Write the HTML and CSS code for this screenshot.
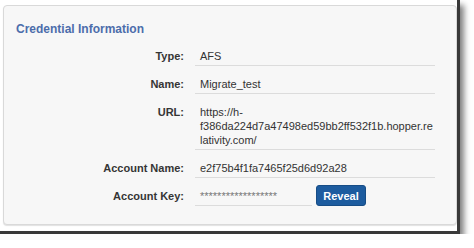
FILE: index.html
```html
<!DOCTYPE html>
<html lang="en">
<head>
    <meta charset="UTF-8">
    <meta name="viewport" content="width=device-width, initial-scale=1.0">
    <title>Credential Information</title>
    <link rel="stylesheet" href="styles.css">
</head>
<body>
    <div class="shot">
        <div class="panel">
            <h2 class="panel-title">Credential Information</h2>

            <div class="row">
                <div class="label">Type:</div>
                <div class="value">AFS</div>
            </div>

            <div class="row">
                <div class="label">Name:</div>
                <div class="value">Migrate_test</div>
            </div>

            <div class="row">
                <div class="label">URL:</div>
                <div class="value">https://h-f386da224d7a47498ed59bb2ff532f1b.hopper.relativity.com/</div>
            </div>

            <div class="row">
                <div class="label">Account Name:</div>
                <div class="value">e2f75b4f1fa7465f25d6d92a28</div>
            </div>

            <div class="row">
                <div class="label">Account Key:</div>
                <div class="key">
                    <div class="value key-field">******************</div>
                    <button class="reveal-btn" type="button">Reveal</button>
                </div>
            </div>
        </div>
    </div>
</body>
</html>
```

FILE: styles.css
```css
* {
    margin: 0;
    padding: 0;
    box-sizing: border-box;
}

body {
    font-family: "Liberation Sans", Arial, sans-serif;
    font-size: 11px;
    color: #333;
    background: #fff;
}

/* cropped screenshot frame: only right and bottom edges show */
.shot {
    width: 460px;
    padding: 5px 0 6px 3px;
    background: #fff;
    border-right: 3px solid #3a3a3a;
    border-bottom: 3px solid #3a3a3a;
    box-shadow: 4px 5px 6px rgba(0, 0, 0, 0.5);
}

.panel {
    width: 454px;
    background: #f7f7f7;
    border: 1px solid #d9d9d9;
    border-radius: 4px;
    box-shadow: 0 1px 1px rgba(0, 0, 0, 0.12);
    padding: 14px 12px 18px;
}

.panel-title {
    font-size: 12px;
    line-height: 18px;
    font-weight: bold;
    color: #4c6dab;
    margin-bottom: 5px;
}

.row {
    display: flex;
    align-items: flex-start;
    gap: 11px;
    margin-top: 7px;
}

.label {
    width: 168px;
    flex-shrink: 0;
    text-align: right;
    font-weight: bold;
    color: #353535;
    padding-top: 4px;
    line-height: 14px;
}

.value {
    width: 240px;
    padding: 4px 0 2px 5px;
    line-height: 14px;
    color: #333;
    border-bottom: 1px solid #dcdcdc;
    overflow-wrap: anywhere;
}

.key {
    display: flex;
    align-items: flex-start;
    gap: 4px;
}

.key-field {
    width: 117px;
    color: #777;
}

.reveal-btn {
    height: 21px;
    width: 50px;
    background: #1d5c9f;
    border: 1px solid #174d86;
    border-radius: 3px;
    color: #fff;
    font-family: inherit;
    font-size: 11px;
    font-weight: bold;
    cursor: pointer;
}
```
